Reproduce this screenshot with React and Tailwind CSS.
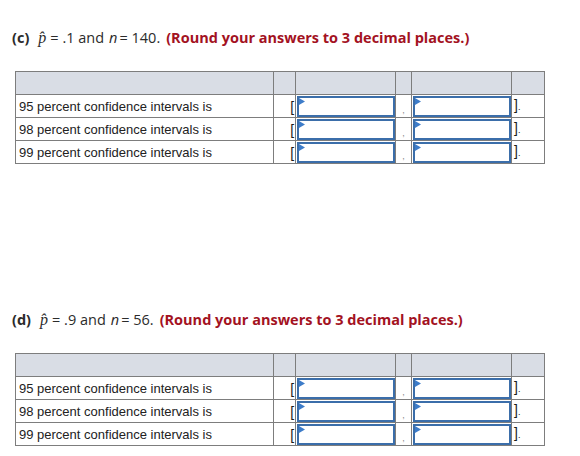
import React from 'react';

const rows = ['95', '98', '99'];

const Flag = () => (
    <svg width="6" height="7" viewBox="0 0 6 7" className="absolute left-0 top-0">
        <path d="M0 0 L6 3.5 L0 7 Z" fill="#3d7cc9" />
    </svg>
);

const AnswerBox = () => (
    <div className="relative h-[21px] w-[98px] mx-auto border-2 border-[#3b6eaa] bg-white">
        <Flag />
    </div>
);

const IntervalTable = () => (
    <table className="border-collapse w-[530px] ml-[15px] text-[13px] text-[#222]" style={{ fontFamily: '"Liberation Sans", Arial, sans-serif' }}>
        <colgroup>
            <col className="w-[259px]" />
            <col className="w-[22px]" />
            <col className="w-[100px]" />
            <col className="w-[16px]" />
            <col className="w-[100px]" />
            <col className="w-[33px]" />
        </colgroup>
        <thead>
            <tr className="h-[23px] bg-[#d9dde5]">
                {[0, 1, 2, 3, 4, 5].map((i) => (
                    <th key={i} className="border border-[#7d7d7d] p-0"></th>
                ))}
            </tr>
        </thead>
        <tbody>
            {rows.map((r) => (
                <tr key={r} className="h-[23px]">
                    <td className="border border-[#7d7d7d] pl-[3px] py-0 leading-none">{r} percent confidence intervals is</td>
                    <td className="border border-[#7d7d7d] p-0 text-right pr-[1px] align-bottom leading-[20px] text-[14px] text-[#1a1a1a]">[</td>
                    <td className="border border-[#7d7d7d] p-0"><AnswerBox /></td>
                    <td className="border border-[#7d7d7d] p-0 align-bottom text-center leading-[14px] text-[9px] text-[#888]">,</td>
                    <td className="border border-[#7d7d7d] p-0"><AnswerBox /></td>
                    <td className="border border-[#7d7d7d] p-0 pl-[2px] align-bottom leading-[20px] text-[14px] text-[#1a1a1a]">]<span className="text-[9px]">.</span></td>
                </tr>
            ))}
        </tbody>
    </table>
);

const Heading = ({ part, p, n }) => (
    <div className="pl-[12px] h-[18px] flex items-center text-[14.5px] text-[#2b2b2b]" style={{ fontFamily: '"Open Sans", Lato, sans-serif' }}>
        <span className="font-bold">({part})</span>
        <span className="ml-[9px] italic text-[16px]" style={{ fontFamily: '"Liberation Serif", serif' }}>
            p̂
        </span>
        <span className="ml-[4px]">= {p} and</span>
        <span className="ml-[5px] italic">n</span>
        <span className="ml-[2px]">= {n}.</span>
        <span className="ml-[6px] font-bold text-[#a3121f]">(Round your answers to 3 decimal places.)</span>
    </div>
);

const App = () => {
    return (
        <div className="w-[580px] h-[456px] bg-white pt-[29px]">
            <Heading part="c" p=".1" n="140" />
            <div className="h-[24px]" />
            <IntervalTable />
            <div className="h-[147px]" />
            <Heading part="d" p=".9" n="56" />
            <div className="h-[24px]" />
            <IntervalTable />
        </div>
    );
};

export default App;
